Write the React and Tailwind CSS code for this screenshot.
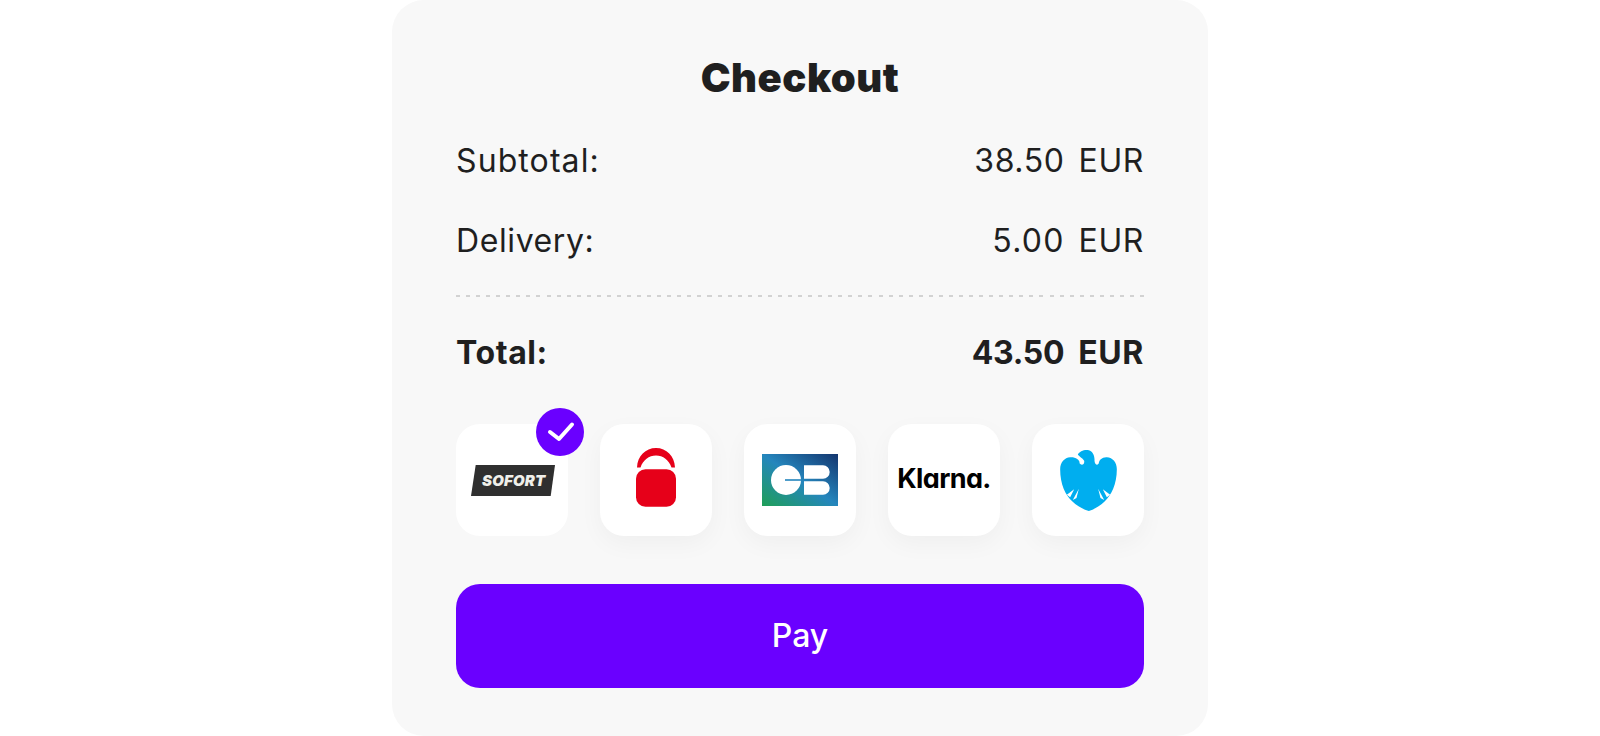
import React from 'react';

const Tile = ({ children, flat }) => (
  <div className={`relative flex h-[112px] w-[112px] items-center justify-center rounded-3xl bg-white ${flat ? '' : 'shadow-[0_8px_24px_rgba(0,0,0,0.04)]'}`}>
    {children}
  </div>
);

const Row = ({ label, amount, bold, labelClass, amountClass }) => (
  <div className={`flex h-20 items-center justify-between pt-[2px] text-[32px] tracking-[0.6px] text-[#1f1f1f] ${bold ? 'font-bold' : 'font-normal'}`}>
    <span className={labelClass}>{label}</span>
    <span className="flex gap-[14px]">
      <span className={amountClass}>{amount}</span>
      <span>EUR</span>
    </span>
  </div>
);

const LockLogo = () => (
  <svg width="40" height="59" viewBox="0 0 40 59" className="mb-[6px]">
    <path d="M1 19.500C1.500 8 9.500 0 20 0C30.500 0 38.500 8 39 19.500L35.500 19.500C33 12 27 7.500 20 7.500C13 7.500 7 12 4.500 19.500Z" fill="#e60019" />
    <rect x="0" y="21.300" width="40" height="37.400" rx="9.500" fill="#e60019" />
  </svg>
);

const CbLogo = () => (
  <svg width="76" height="52" viewBox="0 0 76 52">
    <defs>
      <linearGradient id="cb" x1="0" y1="1" x2="1" y2="0">
        <stop offset="0" stopColor="#1f9f57" />
        <stop offset="0.5" stopColor="#2586bd" />
        <stop offset="1" stopColor="#14356e" />
      </linearGradient>
    </defs>
    <rect width="76" height="52" fill="url(#cb)" />
    <circle cx="24" cy="26" r="15" fill="#fff" />
    <path d="M42 11.300H61a6.700 6.700 0 0 1 0 13.400H42zM42 27.300H61a6.700 6.700 0 0 1 0 13.400H42z" fill="#fff" />
    <rect x="23" y="25.200" width="17" height="1.600" fill="#2586bd" />
  </svg>
);

const BarclaysLogo = () => (
  <svg width="57" height="61" viewBox="92 72 170 183">
    <path
      d="M178 255C160 250 142 240 128 226C108 208 92 175 92 130C92 110 105 95 122 94C140 93 152 103 150 112C156 120 166 116 164 104C158 95 150 92 145 86C150 76 165 70 178 73C190 76 196 90 195 104C196 116 204 120 208 112C208 103 218 93 232 94C250 95 262 110 262 130C262 175 245 208 226 226C212 240 195 250 178 255Z"
      fill="#00aeef"
    />
    <path d="M112 206L134 190L122 214zM130 222L148 188L141 216zM242 206L220 190L232 214zM224 222L206 188L213 216z" fill="#fff" />
  </svg>
);

const App = () => {
  return (
    <div className="flex h-[736px] justify-center bg-white font-['Inter',sans-serif]">
      <div className="flex w-[816px] flex-col rounded-[32px] bg-[#f8f8f8] px-16 pb-12 pt-12">
        <h1 className="mb-3 h-[60px] text-center text-[40px] font-black leading-[60px] tracking-[0.5px] text-[#1f1f1f]">Checkout</h1>

        <Row label="Subtotal:" amount="38.50" labelClass="tracking-[1.1px]" />
        <Row label="Delivery:" amount="5.00" amountClass="tracking-[1.200px]" />
        <div className="mb-4 mt-[15px] h-[2px] bg-[repeating-linear-gradient(90deg,#d2d2d2_0_4px,transparent_4px_10.06px)]" />
        <Row label="Total:" amount="43.50" amountClass="tracking-[-0.3px]" bold />

        <div className="mt-8 flex justify-between">
          <Tile flat>
            <svg width="84" height="31" viewBox="0 0 84 31" className="ml-[1px]">
              <path d="M4.700 0H84L79.700 31H0z" fill="#2f2f2f" />
            </svg>
            <span className="absolute left-[26px] top-[49px] text-[15px] font-black italic leading-[16px] tracking-[0.2px] text-[#efefea]">SOFORT</span>
            <div className="absolute -right-4 -top-4 flex h-12 w-12 items-center justify-center rounded-full bg-[#6a00ff]">
              <svg width="48" height="48" viewBox="0 0 48 48" fill="none" stroke="#fff" strokeWidth="4" strokeLinecap="round" strokeLinejoin="round">
                <path d="M14 24L23 31L36 16.500" />
              </svg>
            </div>
          </Tile>
          <Tile><LockLogo /></Tile>
          <Tile><CbLogo /></Tile>
          <Tile>
            <span className="mb-[3px] text-[27px] font-bold leading-none tracking-[-0.6px] text-black [font-feature-settings:'cv11']">Klarna.</span>
          </Tile>
          <Tile><BarclaysLogo /></Tile>
        </div>

        <button className="mt-12 h-[104px] rounded-3xl bg-[#6a00ff] text-[32px] font-medium text-white">Pay</button>
      </div>
    </div>
  );
};

export default App;
